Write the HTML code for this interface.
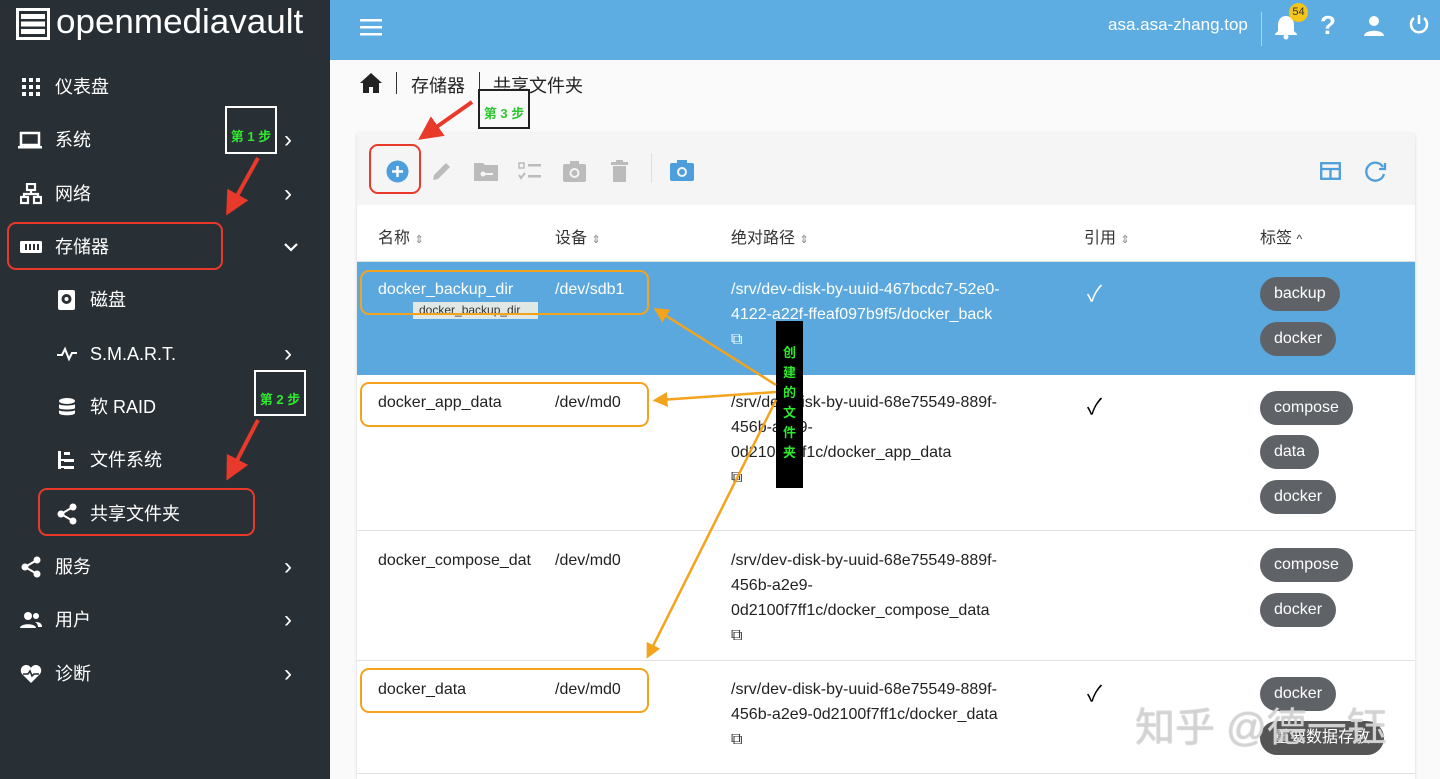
<!DOCTYPE html>
<html><head><meta charset="utf-8"><style>
*{box-sizing:border-box;margin:0;padding:0}
body{width:1440px;height:779px;overflow:hidden;font-family:"Liberation Sans","Noto Sans CJK SC",sans-serif;background:#fafafa;position:relative}
#side{position:absolute;left:0;top:0;width:330px;height:779px;background:#293035;color:#fff}
.logo{position:absolute;left:56px;top:3px;font-size:34px;color:#fff;transform:scaleX(1.03);transform-origin:left}
.nav{position:absolute;left:0;font-size:18px;color:#fff;height:30px;line-height:30px;width:330px}
.nav .ic{position:absolute;left:20px;top:4px;width:22px;height:22px}
.nav span{position:absolute;left:55px;white-space:nowrap}
.sub span{left:90px}.sub .ic{left:56px}
.nav .chev{position:absolute;left:284px;font-size:24px;color:#fff}
#top{position:absolute;left:330px;top:0;width:1110px;height:60px;background:#5dade2;color:#fff}
.card{position:absolute;left:357px;top:133px;width:1058px;height:646px;background:#fff;box-shadow:0 1px 3px rgba(0,0,0,.15)}
.tb{position:absolute;left:0;top:0;width:100%;height:72px;background:#f5f5f5}
.th{position:absolute;top:224px;font-size:16px;color:#333}
.cell{position:absolute;font-size:16px;color:#222;line-height:25px}
.sel{color:#fff}
.tag{position:absolute;background:#5f6368;color:#fff;border-radius:17px;height:34px;line-height:34px;padding:0 14px;font-size:16px}
.row{position:absolute;left:357px;width:1058px;border-bottom:1px solid #e0e0e0}
.ann{position:absolute;border:2px solid #e8392b;border-radius:9px}
.oann{position:absolute;border:2px solid #f4a31c;border-radius:9px}
.step{position:absolute;border:2px solid #fff;background:#293035;color:#2ee82e;font-size:13px;font-weight:bold;text-align:center}
.ck{position:absolute;font-size:22px}
</style></head><body>
<div id="side">
<svg style="position:absolute;left:16px;top:8px" width="34" height="32" viewBox="0 0 34 32"><rect x="1.5" y="1.5" width="31" height="29" fill="none" stroke="#fff" stroke-width="3"/><rect x="5" y="6" width="24" height="5" fill="#fff"/><rect x="5" y="13.5" width="24" height="5" fill="#fff"/><rect x="5" y="21" width="24" height="5" fill="#fff"/></svg>
<div class="logo">openmediavault</div>
<div class="nav" style="top:72px"><svg class="ic" viewBox="0 0 22 22" fill="#fff"><rect x="2" y="2" width="4" height="4"/><rect x="9" y="2" width="4" height="4"/><rect x="16" y="2" width="4" height="4"/><rect x="2" y="9" width="4" height="4"/><rect x="9" y="9" width="4" height="4"/><rect x="16" y="9" width="4" height="4"/><rect x="2" y="16" width="4" height="4"/><rect x="9" y="16" width="4" height="4"/><rect x="16" y="16" width="4" height="4"/></svg><span>仪表盘</span></div>
<div class="nav" style="top:125px"><svg class="ic" style="left:17px;width:26px" viewBox="0 0 26 22"><rect x="4" y="4" width="18" height="12" fill="none" stroke="#fff" stroke-width="2.5"/><rect x="1" y="17" width="24" height="2.5" fill="#fff"/></svg><span>系统</span><span class="chev">›</span></div>
<div class="nav" style="top:179px"><svg class="ic" viewBox="0 0 22 22" fill="none" stroke="#fff" stroke-width="2.2"><rect x="7" y="1" width="8" height="6"/><rect x="1" y="14" width="7" height="6"/><rect x="14" y="14" width="7" height="6"/><path d="M11 7v4M4 14v-3h14v3"/></svg><span>网络</span><span class="chev">›</span></div>
<div class="nav" style="top:232px"><svg class="ic" viewBox="0 0 22 22"><rect x="0" y="5" width="22" height="12" rx="1.5" fill="#fff"/><rect x="5" y="8" width="2" height="6" fill="#293035"/><rect x="9" y="8" width="2" height="6" fill="#293035"/><rect x="13" y="8" width="2" height="6" fill="#293035"/><rect x="17" y="8" width="2" height="6" fill="#293035"/></svg><span>存储器</span><svg style="position:absolute;left:284px;top:10px" width="14" height="10" fill="none" stroke="#fff" stroke-width="2.2"><path d="M1 2l6 6 6-6"/></svg></div>
<div class="nav sub" style="top:285px"><svg class="ic" viewBox="0 0 22 22"><rect x="2" y="1" width="17" height="20" rx="2" fill="#fff"/><circle cx="10.5" cy="10" r="5" fill="#293035"/><circle cx="10.5" cy="10" r="2" fill="#fff"/></svg><span>磁盘</span></div>
<div class="nav sub" style="top:339px"><svg class="ic" viewBox="0 0 22 22" fill="none" stroke="#fff" stroke-width="2"><path d="M1 12h5l3-6 4 10 3-6h5"/></svg><span>S.M.A.R.T.</span><span class="chev">›</span></div>
<div class="nav sub" style="top:392px"><svg class="ic" viewBox="0 0 22 22" fill="#fff"><ellipse cx="11" cy="5" rx="8" ry="3"/><path d="M3 8c0 2 16 2 16 0v4c0 2-16 2-16 0zM3 14c0 2 16 2 16 0v3c0 3-16 3-16 0z"/></svg><span>软 RAID</span></div>
<div class="nav sub" style="top:445px"><svg class="ic" viewBox="0 0 22 22" fill="#fff"><rect x="2" y="2" width="3" height="18"/><rect x="8" y="3" width="6" height="3"/><rect x="8" y="10" width="10" height="3"/><rect x="8" y="17" width="10" height="3"/><rect x="5" y="10" width="3" height="2"/><rect x="5" y="17" width="3" height="2"/></svg><span>文件系统</span></div>
<div class="nav sub" style="top:499px"><svg class="ic" viewBox="0 0 22 22" fill="#fff"><circle cx="17" cy="4" r="3.5"/><circle cx="5" cy="11" r="3.5"/><circle cx="17" cy="18" r="3.5"/><path d="M17 4L5 11l12 7" stroke="#fff" stroke-width="2" fill="none"/></svg><span>共享文件夹</span></div>
<div class="nav" style="top:552px"><svg class="ic" viewBox="0 0 22 22" fill="#fff"><circle cx="17" cy="4" r="3.5"/><circle cx="5" cy="11" r="3.5"/><circle cx="17" cy="18" r="3.5"/><path d="M17 4L5 11l12 7" stroke="#fff" stroke-width="2" fill="none"/></svg><span>服务</span><span class="chev">›</span></div>
<div class="nav" style="top:605px"><svg class="ic" viewBox="0 0 22 22" fill="#fff"><circle cx="8" cy="7" r="4"/><circle cx="16" cy="7" r="3"/><path d="M0 19c0-5 16-5 16 0zM15 13c4 0 7 1 7 5h-4c0-2-1-4-3-5z"/></svg><span>用户</span><span class="chev">›</span></div>
<div class="nav" style="top:659px"><svg class="ic" viewBox="0 0 22 22" fill="#fff"><path d="M11 20L2 11C-1 7 2 2 6 2c2 0 4 1 5 3 1-2 3-3 5-3 4 0 7 5 4 9z"/><path d="M3 11h5l2-3 2 5 2-2h5" stroke="#293035" stroke-width="1.6" fill="none"/></svg><span>诊断</span><span class="chev">›</span></div>
<div class="ann" style="left:7px;top:222px;width:216px;height:48px"></div>
<div class="ann" style="left:38px;top:488px;width:217px;height:48px"></div>
<div class="step" style="left:225px;top:106px;width:52px;height:48px;line-height:58px">第 1 步</div>
<div class="step" style="left:254px;top:370px;width:52px;height:46px;line-height:56px">第 2 步</div>
</div>
<div id="top">
<svg style="position:absolute;left:30px;top:18px" width="22" height="18"><rect y="1" width="22" height="2.5" fill="#fff"/><rect y="8" width="22" height="2.5" fill="#fff"/><rect y="15" width="22" height="2.5" fill="#fff"/></svg>
<div style="position:absolute;left:778px;top:15px;font-size:17px">asa.asa-zhang.top</div>
<div style="position:absolute;left:931px;top:12px;width:1px;height:34px;background:rgba(255,255,255,.5)"></div>
<svg style="position:absolute;left:944px;top:14px" width="24" height="26" viewBox="0 0 24 26" fill="#fff"><path d="M12 2c-5 0-8 4-8 9v6l-3 3v1h22v-1l-3-3v-6c0-5-3-9-8-9z"/><circle cx="12" cy="23" r="2.5"/></svg>
<div style="position:absolute;left:959px;top:3px;width:19px;height:19px;border-radius:50%;background:#f5c518;color:#333;font-size:11px;text-align:center;line-height:19px">54</div>
<div style="position:absolute;left:990px;top:10px;font-size:26px;font-weight:bold">?</div>
<svg style="position:absolute;left:1033px;top:15px" width="22" height="22" viewBox="0 0 22 22" fill="#fff"><circle cx="11" cy="6" r="5"/><path d="M1 21c0-7 20-7 20 0z"/></svg>
<svg style="position:absolute;left:1078px;top:14px" width="22" height="22" viewBox="0 0 22 22" fill="none" stroke="#fff" stroke-width="2.5"><path d="M11 1v9M6 4a8 8 0 1 0 10 0"/></svg>
</div>
<svg style="position:absolute;left:359px;top:72px" width="24" height="22" viewBox="0 0 24 22" fill="#222"><path d="M12 1L1 11h3v10h6v-6h4v6h6V11h3z"/></svg>
<div style="position:absolute;left:396px;top:72px;width:1px;height:22px;background:#333"></div>
<div style="position:absolute;left:411px;top:72px;font-size:18px;color:#222">存储器</div>
<div style="position:absolute;left:479px;top:72px;width:1px;height:22px;background:#333"></div>
<div style="position:absolute;left:493px;top:72px;font-size:18px;color:#222">共享文件夹</div>
<div class="step" style="left:478px;top:89px;width:52px;height:40px;line-height:46px;background:#fafafa;border-color:#222;color:#2ec52e">第 3 步</div>
<div class="card"><div class="tb">
<svg style="position:absolute;left:29px;top:27px" width="23" height="23"><circle cx="11.5" cy="11.5" r="11" fill="#4c9fdc"/><path d="M11.5 6v11M6 11.5h11" stroke="#fff" stroke-width="2.5"/></svg>
<svg style="position:absolute;left:74px;top:27px" width="22" height="22" fill="#bbb"><path d="M2 20l1-5L15 3l4 4L7 19z"/></svg>
<svg style="position:absolute;left:117px;top:28px" width="24" height="20" fill="#bbb"><path d="M0 2h9l2 2h13v16H0z"/><circle cx="9" cy="13" r="2.5" fill="#f5f5f5"/><rect x="11" y="12" width="8" height="2" fill="#f5f5f5"/></svg>
<svg style="position:absolute;left:161px;top:28px" width="24" height="20" fill="#bbb"><rect x="10" y="3" width="13" height="2.5"/><rect x="10" y="14" width="13" height="2.5"/><rect x="1" y="2" width="5" height="5" fill="none" stroke="#bbb" stroke-width="1.5"/><path d="M1 14l2 3 4-5" stroke="#bbb" stroke-width="2" fill="none"/></svg>
<svg style="position:absolute;left:206px;top:27px" width="23" height="22"><rect x="0" y="4" width="23" height="18" rx="2" fill="#bbb"/><rect x="7" y="1" width="9" height="4" fill="#bbb"/><circle cx="11.5" cy="13" r="5" fill="#f5f5f5"/><circle cx="11.5" cy="13" r="3" fill="#bbb"/></svg>
<svg style="position:absolute;left:254px;top:27px" width="17" height="22" fill="#bbb"><rect x="0" y="2" width="17" height="3"/><rect x="5" y="0" width="7" height="3"/><rect x="2" y="6" width="13" height="16"/></svg>
<div style="position:absolute;left:294px;top:20px;width:1px;height:30px;background:#ddd"></div>
<svg style="position:absolute;left:313px;top:26px" width="24" height="22"><rect x="0" y="4" width="24" height="18" rx="2" fill="#4c9fdc"/><rect x="7" y="1" width="10" height="4" fill="#4c9fdc"/><circle cx="12" cy="13" r="5" fill="#f5f5f5"/><circle cx="12" cy="13" r="3" fill="#4c9fdc"/></svg>
<svg style="position:absolute;left:963px;top:29px" width="21" height="18" fill="none" stroke="#4c9fdc" stroke-width="2.3"><rect x="1.2" y="1.2" width="18.6" height="15.6"/><path d="M1 7h19M10.5 7v10"/></svg>
<svg style="position:absolute;left:1007px;top:27px" width="23" height="23" fill="none" stroke="#4c9fdc" stroke-width="2.3"><path d="M19 7A9 9 0 1 0 20 14"/><path d="M21 3v6h-6" /></svg>
</div></div>
<div class="ann" style="left:369px;top:144px;width:52px;height:50px"></div>
<div class="th" style="left:378px">名称 <span style="font-size:11px;color:#888">⇕</span></div>
<div class="th" style="left:555px">设备 <span style="font-size:11px;color:#888">⇕</span></div>
<div class="th" style="left:731px">绝对路径 <span style="font-size:11px;color:#888">⇕</span></div>
<div class="th" style="left:1084px">引用 <span style="font-size:11px;color:#888">⇕</span></div>
<div class="th" style="left:1260px">标签 <span style="font-size:12px">^</span></div>
<div class="row" style="top:205px;height:57px;border-color:#ddd"></div>
<div class="row" style="top:262px;height:113px;background:#5ba8de;border:0"></div>
<div class="row" style="top:375px;height:156px"></div>
<div class="row" style="top:531px;height:130px"></div>
<div class="row" style="top:661px;height:113px"></div>
<div class="cell sel" style="left:378px;top:277px">docker_backup_dir</div>
<div class="cell sel" style="left:555px;top:277px">/dev/sdb1</div>
<div class="cell sel" style="left:731px;top:277px">/srv/dev-disk-by-uuid-467bcdc7-52e0-<br>4122-a22f-ffeaf097b9f5/docker_back<br>⧉</div>
<div class="ck" style="left:1087px;top:276px;color:#fff">✓</div>
<div class="tag" style="left:1260px;top:277px">backup</div>
<div class="tag" style="left:1260px;top:322px">docker</div>
<div style="position:absolute;left:413px;top:302px;width:125px;height:17px;background:#dfe8e4;font-size:12px;color:#333;padding-left:6px;line-height:17px">docker_backup_dir</div>
<div class="cell" style="left:378px;top:390px">docker_app_data</div>
<div class="cell" style="left:555px;top:390px">/dev/md0</div>
<div class="cell" style="left:731px;top:390px">/srv/dev-disk-by-uuid-68e75549-889f-<br>456b-a2e9-<br>0d2100f7ff1c/docker_app_data<br>⧉</div>
<div class="ck" style="left:1087px;top:389px">✓</div>
<div class="tag" style="left:1260px;top:391px">compose</div>
<div class="tag" style="left:1260px;top:435px">data</div>
<div class="tag" style="left:1260px;top:480px">docker</div>
<div class="cell" style="left:378px;top:548px">docker_compose_dat</div>
<div class="cell" style="left:555px;top:548px">/dev/md0</div>
<div class="cell" style="left:731px;top:548px">/srv/dev-disk-by-uuid-68e75549-889f-<br>456b-a2e9-<br>0d2100f7ff1c/docker_compose_data<br>⧉</div>
<div class="tag" style="left:1260px;top:548px">compose</div>
<div class="tag" style="left:1260px;top:593px">docker</div>
<div class="cell" style="left:378px;top:677px">docker_data</div>
<div class="cell" style="left:555px;top:677px">/dev/md0</div>
<div class="cell" style="left:731px;top:677px">/srv/dev-disk-by-uuid-68e75549-889f-<br>456b-a2e9-0d2100f7ff1c/docker_data<br>⧉</div>
<div class="ck" style="left:1087px;top:676px">✓</div>
<div class="tag" style="left:1260px;top:677px">docker</div>
<div class="tag" style="left:1260px;top:721px;background:#555">重要数据存放</div>
<div style="position:absolute;left:1135px;top:695px;font-size:40px;color:rgba(235,235,235,.75);text-shadow:0 0 1px #888">知乎 @德一钰</div>
<div class="oann" style="left:360px;top:270px;width:289px;height:45px"></div>
<div class="oann" style="left:360px;top:382px;width:289px;height:45px"></div>
<div class="oann" style="left:360px;top:668px;width:289px;height:45px"></div>
<div style="position:absolute;left:776px;top:321px;width:27px;height:167px;background:#000;color:#2ee82e;font-size:13px;font-weight:bold;text-align:center;line-height:20px;padding-top:22px">创<br>建<br>的<br>文<br>件<br>夹</div>
<svg style="position:absolute;left:0;top:0" width="1440" height="779">
<defs><marker id="r" markerWidth="6" markerHeight="6" refX="3" refY="3" orient="auto"><path d="M0 0L6 3 0 6z" fill="#e8392b"/></marker>
<marker id="o" markerWidth="6" markerHeight="6" refX="3" refY="3" orient="auto"><path d="M0 0L6 3 0 6z" fill="#f4a31c"/></marker></defs>
<path d="M258 158L232 205" stroke="#e8392b" stroke-width="4" marker-end="url(#r)"/>
<path d="M258 420L232 470" stroke="#e8392b" stroke-width="4" marker-end="url(#r)"/>
<path d="M472 102L428 133" stroke="#e8392b" stroke-width="4" marker-end="url(#r)"/>
<g stroke="#f4a31c" stroke-width="2.5" fill="none">
<path d="M776 385L660 312" marker-end="url(#o)"/>
<path d="M776 392L660 400" marker-end="url(#o)"/>
<path d="M776 400L650 652" marker-end="url(#o)"/></g>
</svg>
</body></html>
